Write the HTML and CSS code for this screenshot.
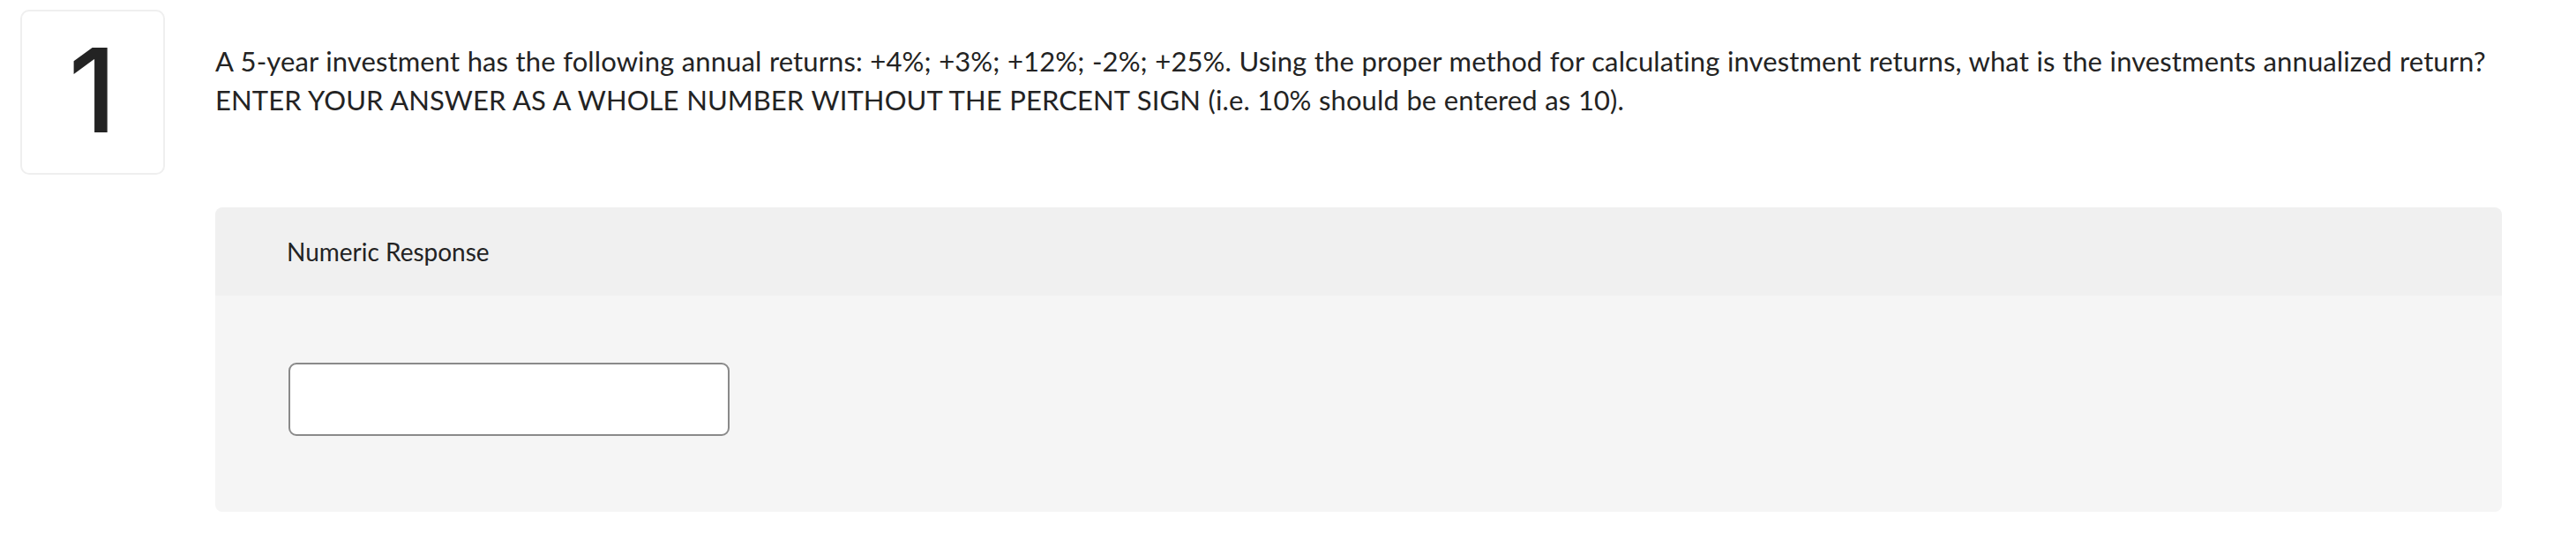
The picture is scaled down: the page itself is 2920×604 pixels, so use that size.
FILE: index.html
```html
<!DOCTYPE html>
<html>
<head>
    <title>Question 1</title>
    <link rel="stylesheet" href="styles.css">
</head>
<body>
    <!-- Question block -->
    <div class="question">
        <div class="question-number">1</div>
        <div class="question-body">
            <div class="question-text">
                A 5-year investment has the following annual returns: +4%; +3%; +12%; -2%; +25%. Using the proper method for calculating investment returns, what is the investments annualized return?<br>
                ENTER YOUR ANSWER AS A WHOLE NUMBER WITHOUT THE PERCENT SIGN (i.e. 10% should be entered as 10).
            </div>
            <div class="response-panel">
                <div class="response-header">Numeric Response</div>
                <div class="response-content">
                    <input type="text" class="numeric-input">
                </div>
            </div>
        </div>
    </div>
</body>
</html>
```

FILE: styles.css
```css
body { margin: 0; background: #fff; color: #232323; font-family: "Lato", "Liberation Sans", sans-serif; }
.question { display: flex; padding: 11px 84px 0 23px; }
.question-number { width: 160px; height: 183px; flex-shrink: 0; border: 2px solid #efefef; border-radius: 10px;
    display: flex; align-items: center; justify-content: center; padding-bottom: 6px; box-sizing: content-box;
    font-family: "Inter", sans-serif; font-weight: 500; font-size: 132px; color: #232323; }
.question-number { height: 177px; }
.question-body { flex: 1; margin-left: 57px; }
.question-text { font-size: 31px; line-height: 44px; margin-top: 36px; letter-spacing: 0.1px; word-spacing: 0.5px; }
.response-panel { margin-top: 100px; border-radius: 8px; overflow: hidden; }
.response-header { background: #f0f0f0; height: 100px; padding-left: 81px; display: flex; align-items: center; font-size: 28px; }
.response-content { background: #f5f5f5; padding: 76px 83px 86px; }
.numeric-input { display: block; width: 500px; height: 83px; box-sizing: border-box; border: 2px solid #8a8a8a; border-radius: 9px; background: #fff; }
```
